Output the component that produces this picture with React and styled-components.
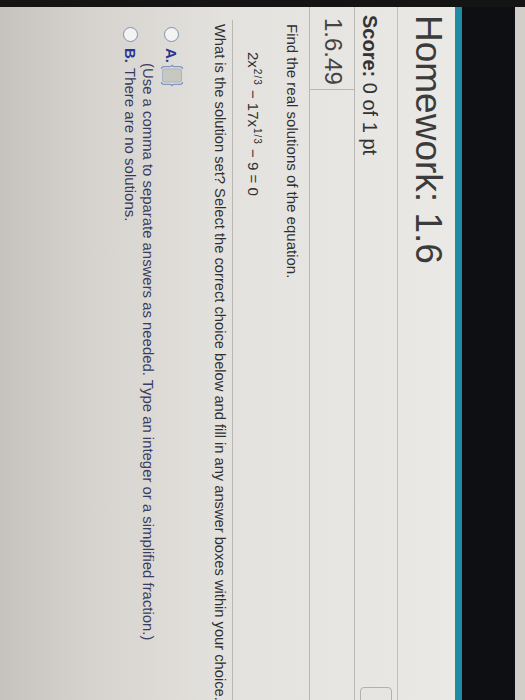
import styled, { createGlobalStyle } from "styled-components";

const GlobalStyle = createGlobalStyle`
  * {
    box-sizing: border-box;
  }
  html,
  body {
    margin: 0;
    width: 525px;
    height: 700px;
    overflow: hidden;
    background: #121212;
  }
`;

// the photo was taken with the phone turned, so the whole screen lies rotated 90deg
function App() {
  return (
    <>
      <GlobalStyle />
      <Screen>
        <Bezel />
        <Display>
          <Glare />
          <TopBar />
          <Page>
            <Title>Homework: 1.6</Title>
            <ScoreRow>
              <Score>
                <b>Score:</b> 0 of 1 pt
              </Score>
              <HelpButton />
            </ScoreRow>
            <TabRow>
              <Tab>1.6.49</Tab>
            </TabRow>
            <Body>
              <Prompt>Find the real solutions of the equation.</Prompt>
              <Equation>
                2x<sup>2/3</sup> − 17x<sup>1/3</sup> − 9 = 0
              </Equation>
              <Rule />
              <Question>
                What is the solution set? Select the correct choice below and
                fill in any answer boxes within your choice.
              </Question>
              <ChoiceRow $height={24} $gap={27}>
                <Radio />
                <Letter>A.</Letter>
                <AnswerBox width="23" height="24" viewBox="0 0 23 24">
                  <path
                    d="M5 1.5 Q2.6 1.5 2.6 4 V9.6 Q2.6 12 0.8 12 Q2.6 12 2.6 14.4 V20 Q2.6 22.5 5 22.5"
                    fill="none"
                    stroke="#8595bb"
                    strokeWidth="1.3"
                  />
                  <rect
                    x="5"
                    y="2.5"
                    width="13"
                    height="19"
                    rx="2"
                    fill="#c8c8c0"
                    stroke="#a4b1cf"
                    strokeWidth="1"
                  />
                  <path
                    d="M18 1.5 Q20.4 1.5 20.4 4 V9.6 Q20.4 12 22.2 12 Q20.4 12 20.4 14.4 V20 Q20.4 22.5 18 22.5"
                    fill="none"
                    stroke="#8595bb"
                    strokeWidth="1.3"
                  />
                </AnswerBox>
              </ChoiceRow>
              <Hint>
                (Use a comma to separate answers as needed. Type an integer or a
                simplified fraction.)
              </Hint>
              <ChoiceRow $height={17} $gap={0}>
                <Radio />
                <Letter>B.</Letter>
                <ChoiceText>There are no solutions.</ChoiceText>
              </ChoiceRow>
            </Body>
          </Page>
        </Display>
      </Screen>
    </>
  );
}

const Screen = styled.div`
  width: 700px;
  height: 525px;
  display: flex;
  transform-origin: 0 0;
  transform: translateX(525px) rotate(90deg);
  font-family: "Liberation Sans", Arial, sans-serif;
  overflow: hidden;
`;
const Bezel = styled.div`
  flex: none;
  width: 7px;
  background: #141414;
`;
const Display = styled.div`
  flex: 1;
  min-width: 0;
  display: flex;
  flex-direction: column;
`;
const Glare = styled.div`
  height: 10px;
  background: #d2cec9;
`;
const TopBar = styled.div`
  height: 60px;
  background: #0e0f13;
  border-bottom: 7px solid #1f8ba4;
`;
const Page = styled.div`
  flex: 1;
  overflow: hidden;
  color: #333;
  background: linear-gradient(
    180deg,
    #ebe9e5 0%,
    #e4e2de 50%,
    #d6d3cf 80%,
    #c6c2be 100%
  );
`;
const Title = styled.h1`
  margin: 0;
  padding: 7px 0 10px 8px;
  font-size: 37px;
  font-weight: 400;
  line-height: 40px;
  color: #3b3b3b;
  border-bottom: 1px solid #c2c0bc;
`;
const ScoreRow = styled.div`
  display: flex;
  align-items: center;
  justify-content: space-between;
  height: 43px;
  padding-left: 8px;
  border-bottom: 1px solid #b9b7b3;
`;
const Score = styled.div`
  align-self: flex-end;
  padding-bottom: 3px;
  font-size: 20px;
  line-height: 24px;
  color: #333;
`;
const HelpButton = styled.div`
  flex: none;
  width: 40px;
  height: 32px;
  margin-right: -27px;
  border: 1px solid #b3b1ad;
  border-radius: 4px;
  background: #e7e5e1;
`;
const TabRow = styled.div`
  display: flex;
  height: 45px;
  border-bottom: 1px solid #b9b7b3;
`;
const Tab = styled.div`
  width: 83px;
  padding: 6px 0 0 11px;
  font-size: 24px;
  line-height: 30px;
  color: #444;
  border-right: 1px solid #b9b7b3;
`;
const Body = styled.div`
  padding: 8px 0 0 17px;
  font-size: 15px;
  line-height: 18px;
  color: #2f2f2f;
`;
const Prompt = styled.p`
  margin: 0;
  white-space: nowrap;
`;
const Equation = styled.div`
  margin-top: 21px;
  padding-left: 28px;
  white-space: nowrap;

  sup {
    font-size: 10px;
    line-height: 0;
    vertical-align: 6px;
    letter-spacing: 1px;
    margin-left: 1px;
  }
`;
const Rule = styled.div`
  margin: 11px 0 0 -4px;
  border-top: 1px solid #b9b7b3;
`;
const Question = styled.p`
  margin: 3px 0 0;
  font-size: 14.7px;
  white-space: nowrap;
`;
const ChoiceRow = styled.div`
  display: flex;
  align-items: center;
  height: ${(p) => p.$height}px;
  margin-top: ${(p) => p.$gap}px;
  line-height: 17px;
`;
const Radio = styled.span`
  flex: none;
  width: 15px;
  height: 15px;
  margin: 0 6px 0 3px;
  border-radius: 50%;
  border: 1.5px solid #7f8fb2;
  background: #f3f3f1;
`;
const Letter = styled.span`
  font-weight: 700;
  color: #2a3592;
`;
const AnswerBox = styled.svg`
  flex: none;
  margin-left: 1px;
`;
const Hint = styled.div`
  margin-top: 4px;
  padding-left: 39px;
  font-size: 14.9px;
  line-height: 17px;
  color: #3a3c60;
  white-space: nowrap;
`;
const ChoiceText = styled.span`
  margin-left: 5px;
  color: #35375c;
`;

export default App;
